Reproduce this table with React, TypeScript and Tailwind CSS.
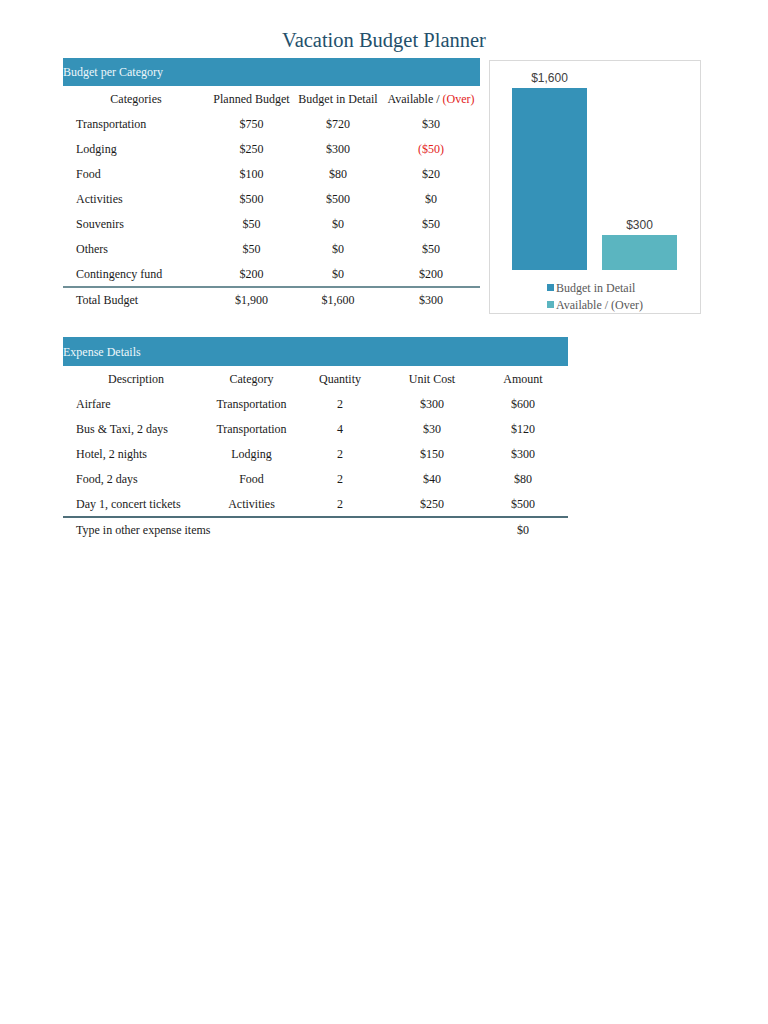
import React from "react";

const SERIF = { fontFamily: '"Liberation Serif", "Times New Roman", serif' };
const SANS = { fontFamily: '"Liberation Sans", Arial, sans-serif' };

type BudgetRow = { name: string; planned: string; detail: string; avail: string; over?: boolean };

const budgetRows: BudgetRow[] = [
  { name: "Transportation", planned: "$750", detail: "$720", avail: "$30" },
  { name: "Lodging", planned: "$250", detail: "$300", avail: "($50)", over: true },
  { name: "Food", planned: "$100", detail: "$80", avail: "$20" },
  { name: "Activities", planned: "$500", detail: "$500", avail: "$0" },
  { name: "Souvenirs", planned: "$50", detail: "$0", avail: "$50" },
  { name: "Others", planned: "$50", detail: "$0", avail: "$50" },
  { name: "Contingency fund", planned: "$200", detail: "$0", avail: "$200" },
];

const expenses = [
  ["Airfare", "Transportation", "2", "$300", "$600"],
  ["Bus & Taxi, 2 days", "Transportation", "4", "$30", "$120"],
  ["Hotel, 2 nights", "Lodging", "2", "$150", "$300"],
  ["Food, 2 days", "Food", "2", "$40", "$80"],
  ["Day 1, concert tickets", "Activities", "2", "$250", "$500"],
];

function BudgetTable() {
  const row = "grid grid-cols-[146px_85px_88px_98px] h-[25px] items-center text-[12px] text-[#1a1a1a]";
  return (
    <div className="w-[417px]">
      <div className="h-[28px] bg-[#3592b8] flex items-center text-[12px] text-[#eef7fb]">
        Budget per Category
      </div>
      <div className={row}>
        <div className="text-center">Categories</div>
        <div className="text-center">Planned Budget</div>
        <div className="text-center">Budget in Detail</div>
        <div className="text-center whitespace-nowrap">
          Available / <span className="text-[#e3231c]">(Over)</span>
        </div>
      </div>
      {budgetRows.map((r) => (
        <div key={r.name} className={row}>
          <div className="pl-[13px]">{r.name}</div>
          <div className="text-center">{r.planned}</div>
          <div className="text-center">{r.detail}</div>
          <div className={`text-center ${r.over ? "text-[#e3231c]" : ""}`}>{r.avail}</div>
        </div>
      ))}
      <div className="h-[1.5px] bg-[#6f8f97]" />
      <div className={row}>
        <div className="pl-[13px]">Total Budget</div>
        <div className="text-center">$1,900</div>
        <div className="text-center">$1,600</div>
        <div className="text-center">$300</div>
      </div>
    </div>
  );
}

function Chart() {
  return (
    <div className="ml-[9px] mt-[2px] w-[212px] h-[254px] border border-[#d9d9d9] flex flex-col">
      <div className="h-[210px] flex items-end gap-[15px] pl-[22px]">
        <div className="flex flex-col items-center w-[75px]">
          <div className="h-[16px] leading-[16px] mb-[2px] text-[12px] text-[#404040]" style={SANS}>
            $1,600
          </div>
          <div className="w-[75px] h-[182px] bg-[#3592b8]" />
        </div>
        <div className="flex flex-col items-center w-[75px]">
          <div className="h-[16px] leading-[16px] mb-[2px] text-[12px] text-[#404040]" style={SANS}>
            $300
          </div>
          <div className="w-[75px] h-[35px] bg-[#5bb5c0]" />
        </div>
      </div>
      <div className="pt-[9px] pl-[57px] text-[12px] text-[#595959]">
        <div className="flex items-center h-[17px]">
          <span className="w-[7px] h-[7px] bg-[#3592b8] mr-[2px]" />
          Budget in Detail
        </div>
        <div className="flex items-center h-[17px]">
          <span className="w-[7px] h-[7px] bg-[#5bb5c0] mr-[2px]" />
          Available / (Over)
        </div>
      </div>
    </div>
  );
}

function ExpenseTable() {
  const row = "grid grid-cols-[146px_85px_92px_92px_90px] h-[25px] items-center text-[12px] text-[#1a1a1a]";
  return (
    <div className="w-[505px] mt-[23px]">
      <div className="h-[29px] bg-[#3592b8] flex items-center text-[12px] text-[#eef7fb]">
        Expense Details
      </div>
      <div className={row}>
        <div className="text-center">Description</div>
        <div className="text-center">Category</div>
        <div className="text-center">Quantity</div>
        <div className="text-center">Unit Cost</div>
        <div className="text-center">Amount</div>
      </div>
      {expenses.map((e) => (
        <div key={e[0]} className={row}>
          <div className="pl-[13px] whitespace-nowrap">{e[0]}</div>
          <div className="text-center">{e[1]}</div>
          <div className="text-center">{e[2]}</div>
          <div className="text-center">{e[3]}</div>
          <div className="text-center">{e[4]}</div>
        </div>
      ))}
      <div className="h-[1.5px] bg-[#4f6f7a]" />
      <div className={row}>
        <div className="pl-[13px] whitespace-nowrap col-span-4">Type in other expense items</div>
        <div className="text-center">$0</div>
      </div>
    </div>
  );
}

export default function App() {
  return (
    <div className="w-[768px] h-[1024px] bg-white" style={SERIF}>
      <div className="h-[58px] pt-[26px] text-center text-[20.5px] leading-[28px] text-[#24506b]">
        Vacation Budget Planner
      </div>
      <div className="pl-[63px]">
        <div className="flex items-start">
          <BudgetTable />
          <Chart />
        </div>
        <ExpenseTable />
      </div>
    </div>
  );
}
